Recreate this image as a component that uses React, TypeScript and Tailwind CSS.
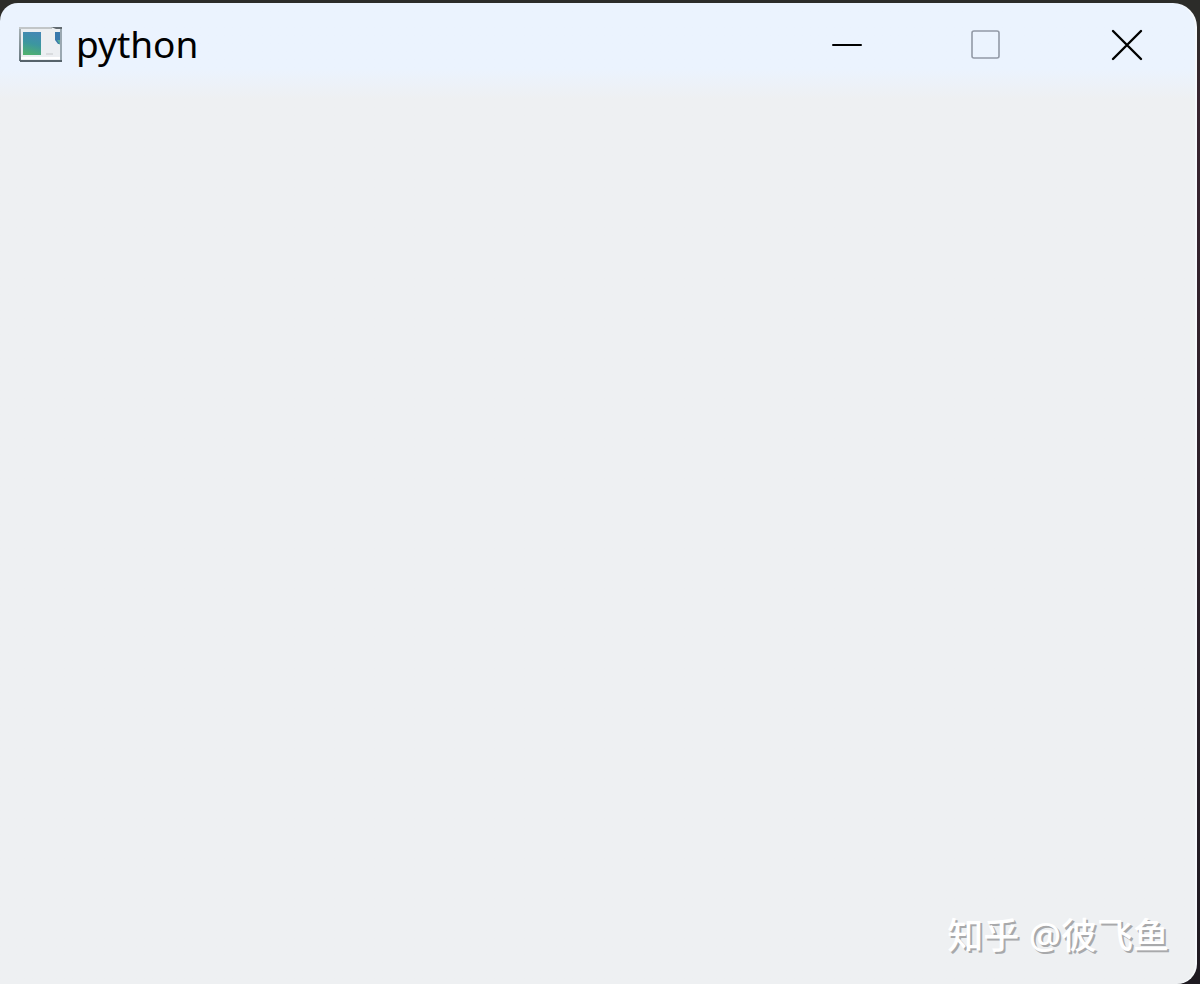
import React from 'react'

interface CaptionButtonProps {
  label: string
  disabled?: boolean
  children: React.ReactNode
}

const CaptionButton: React.FC<CaptionButtonProps> = ({ label, disabled, children }) => (
  <button
    type="button"
    aria-label={label}
    disabled={disabled}
    className="flex w-[140px] items-center justify-center self-stretch"
  >
    {children}
  </button>
)

const AppIcon = () => (
  <svg width="46" height="38" viewBox="0 0 46 38" aria-hidden="true">
    <defs>
      <linearGradient id="pane" x1="0.6" y1="0" x2="0.4" y2="1">
        <stop offset="0" stopColor="#4488b4" />
        <stop offset="0.5" stopColor="#3c96a0" />
        <stop offset="1" stopColor="#4fb070" />
      </linearGradient>
      <linearGradient id="frame" x1="0" y1="0" x2="0" y2="1">
        <stop offset="0" stopColor="#a9b3b6" />
        <stop offset="1" stopColor="#68777f" />
      </linearGradient>
    </defs>
    <rect x="2" y="2" width="41" height="33" fill="#eceff2" />
    <rect x="1" y="1" width="2" height="34" fill="url(#frame)" />
    <path d="M1 2h33" stroke="#c2c6c8" strokeWidth="2" />
    <path d="M33 1h11v2H38z" fill="#626a70" />
    <rect x="42" y="3" width="2" height="32" fill="#9ba8b1" />
    <rect x="5" y="6" width="18" height="23" fill="url(#pane)" />
    <path d="M37 6h5v12h-2l-3-4z" fill="#3979ac" />
    <path d="M39 14h3v5z" fill="#54a89a" />
    <path d="M28 28h7" stroke="#c5c8ca" />
    <path d="M3 32h39" stroke="#ffffff" strokeWidth="2" />
    <path d="M2 35h42" stroke="#56636b" strokeWidth="2" />
  </svg>
)

const TitleBar = () => (
  <header className="flex h-[84px] items-center pl-[18px]">
    <AppIcon />
    <h1 className="ml-3 flex-1 pb-[3px] text-[37px] leading-[48px] text-black">python</h1>

    <CaptionButton label="Minimize">
      <svg width="30" height="30" viewBox="0 0 30 30" fill="none" stroke="#000">
        <path d="M1 15h28" strokeWidth="2" strokeLinecap="round" />
      </svg>
    </CaptionButton>
    <CaptionButton label="Maximize" disabled>
      <svg width="32" height="30" viewBox="0 0 32 30" fill="none" stroke="#9299a6">
        <rect x="1" y="1" width="27" height="27" rx="2" strokeWidth="1.6" />
      </svg>
    </CaptionButton>
    <CaptionButton label="Close">
      <svg width="32" height="32" viewBox="0 0 32 32" fill="none" stroke="#000">
        <path d="M2 2l28 28M30 2L2 30" strokeWidth="2.4" strokeLinecap="round" />
      </svg>
    </CaptionButton>
  </header>
)

const App = () => (
  <div className="flex min-h-screen bg-linear-to-b from-[#2c2c29] from-2% via-[#38242f] via-10% to-[#1e1a21] pt-[3px] pr-[3px] font-['Noto_Sans','Noto_Sans_CJK_SC',sans-serif]">
    <div className="flex flex-1 flex-col overflow-hidden rounded-tl-[18px] rounded-tr-[24px] rounded-br-[20px] bg-[#eef0f2] bg-linear-to-b from-[#ebf3fe] from-[66px] to-[#eef0f2] to-[96px] shadow-[inset_-2px_0_0_#f5f8fb]">
      <TitleBar />
      <main className="flex flex-1 items-end justify-end pr-7 pb-6">
        <p className="text-[36px] leading-[48px] font-medium text-white [text-shadow:2px_2px_0_#a8a9ab]">知乎 @彼飞鱼</p>
      </main>
    </div>
  </div>
)

export default App
